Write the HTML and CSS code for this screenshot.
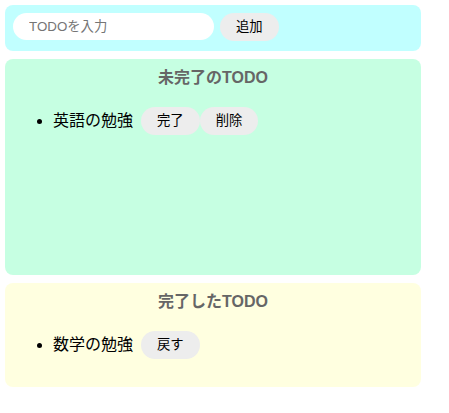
FILE: index.html
```html
<!DOCTYPE html>
<html lang="ja">
<head>
<meta charset="utf-8">
<title>TODO</title>
<link rel="stylesheet" href="styles.css">
</head>
<body>
<div class="app">
  <div class="input-area">
    <input class="todo-input" type="text" placeholder="TODOを入力">
    <button class="btn">追加</button>
  </div>
  <div class="incomplete-area">
    <p class="title">未完了のTODO</p>
    <ul class="todo-list">
      <div class="list-row">
        <li class="todo-item">英語の勉強</li>
        <button class="btn">完了</button><button class="btn">削除</button>
      </div>
    </ul>
  </div>
  <div class="complete-area">
    <p class="title">完了したTODO</p>
    <ul class="todo-list">
      <div class="list-row">
        <li class="todo-item">数学の勉強</li>
        <button class="btn">戻す</button>
      </div>
    </ul>
  </div>
</div>
</body>
</html>
```
FILE: styles.css
```css
body {
  margin: 0;
  font-family: "Liberation Sans", "Noto Sans CJK JP", sans-serif;
  font-size: 16px;
  color: #000;
  background: #fff;
}

.app {
  display: flex;
  flex-direction: column;
  align-items: flex-start;
  gap: 8px;
  padding: 5px;
}

.input-area,
.incomplete-area,
.complete-area {
  width: 400px;
  padding: 8px;
  border-radius: 8px;
}

.input-area {
  background-color: #c1ffff;
  height: 30px;
  display: flex;
  align-items: flex-start;
  gap: 6px;
}

.incomplete-area {
  background-color: #c6ffe2;
  min-height: 200px;
}

.complete-area {
  background-color: #ffffe0;
}

.title {
  text-align: center;
  margin: 0 0 16px;
  font-weight: bold;
  color: #666;
  line-height: 22px;
  padding-bottom: 2px;
}

.todo-list {
  margin: 16px 0;
  padding-left: 40px;
}

.list-row {
  display: flex;
  align-items: center;
  padding-bottom: 4px;
}

.todo-item {
  margin-right: 8px;
  line-height: 24px;
}

.todo-input {
  box-sizing: border-box;
  width: 201px;
  height: 27px;
  border: none;
  border-radius: 16px;
  padding: 6px 16px;
  outline: none;
  background: #fff;
  font-family: "Liberation Sans", "Noto Sans CJK JP", sans-serif;
  font-size: 13.333px;
  color: #000;
}

.todo-input::placeholder {
  color: #757575;
}

.btn {
  box-sizing: border-box;
  height: 28px;
  border: none;
  border-radius: 16px;
  padding: 4px 16px;
  background-color: #ededed;
  font-family: "Liberation Sans", "Noto Sans CJK JP", sans-serif;
  font-size: 13.333px;
  line-height: 20px;
  color: #000;
  cursor: pointer;
}
```
